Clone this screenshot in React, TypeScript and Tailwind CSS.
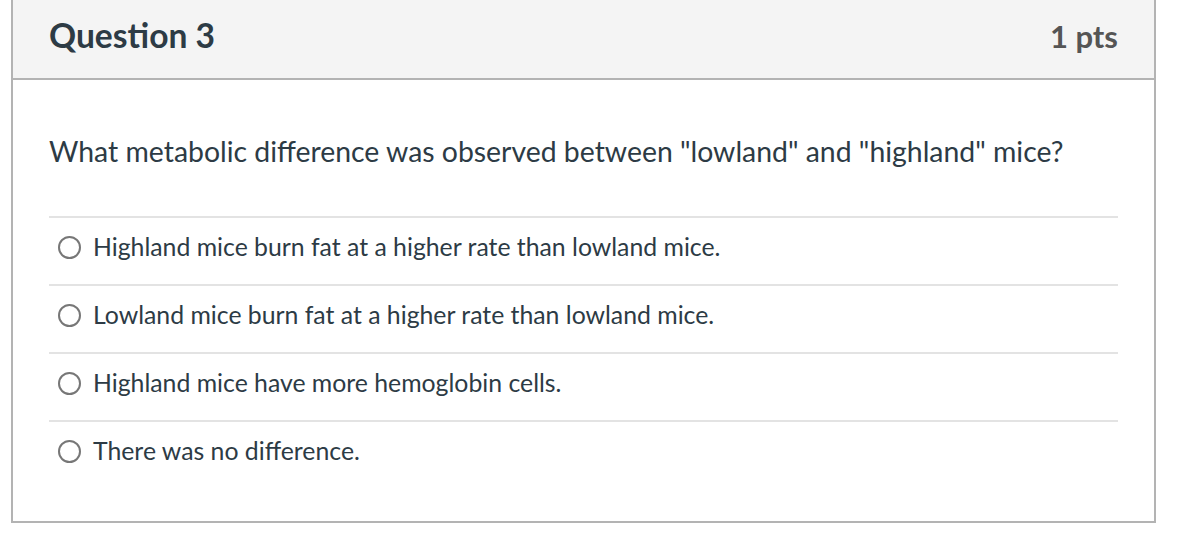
import React from "react";

const options = [
  "Highland mice burn fat at a higher rate than lowland mice.",
  "Lowland mice burn fat at a higher rate than lowland mice.",
  "Highland mice have more hemoglobin cells.",
  "There was no difference.",
];

export default function App() {
  return (
    <div className="w-[1198px] h-[533px] bg-white overflow-hidden" style={{ fontFamily: "Lato, 'Noto Sans', sans-serif" }}>
      <div className="ml-[11px] mt-[-10px] w-[1145px] h-[533px] border-x-2 border-b-2 border-[#b3b3b3]">
        <div className="h-[90px] bg-[#f4f4f4] border-b-2 border-[#b3b3b3] flex items-baseline justify-between pl-[36px] pr-[36px] pt-[29px]">
          <span className="text-[33.6px] font-bold text-[#2d3b45] leading-none">Question 3</span>
          <span className="text-[31px] font-bold text-[#555555] leading-none">1 pts</span>
        </div>
        <div className="px-[36px]">
          <div className="pt-[57px] pb-[51px] text-[28.4px] text-[#2d3b45] leading-none whitespace-nowrap">
            What metabolic difference was observed between "lowland" and "highland" mice?
          </div>
          {options.map((o, i) => (
            <div key={i} className="border-t-2 border-[#e3e3e3] h-[68px] flex items-center pl-[9px] pb-[8px]">
              <span className="w-[23px] h-[23px] rounded-full border-2 border-[#777777] mr-[12px] shrink-0" />
              <span className="text-[24.8px] text-[#2d3b45] leading-none whitespace-nowrap">{o}</span>
            </div>
          ))}
        </div>
      </div>
    </div>
  );
}
